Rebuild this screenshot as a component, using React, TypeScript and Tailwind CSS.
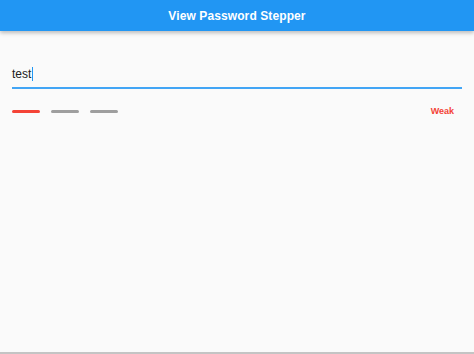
export default function App() {
  const steps = ["bg-[#f44336]", "bg-[#9e9e9e]", "bg-[#9e9e9e]"];

  return (
    <div
      className="w-[474px] h-[354px] bg-[#fafafa] flex flex-col overflow-hidden"
      style={{ fontFamily: '"Helvetica Neue", "Liberation Sans", Arial, sans-serif' }}
    >
      {/* App bar */}
      <div className="h-[31px] bg-[#2196f3] shadow-[0_2px_4px_rgba(0,0,0,0.25)] flex items-center justify-center shrink-0 z-10">
        <span className="text-white text-[12px] font-bold tracking-[0.1px]">View Password Stepper</span>
      </div>

      <div className="flex-1 px-3 flex flex-col">
        {/* Password field */}
        <div className="mt-[30px] h-[28px] border-b-2 border-[#42a5f5] flex items-center">
          <span className="text-[12px] text-[#212121] leading-none">test</span>
          <span className="w-[1.5px] h-[14px] bg-[#2196f3] ml-[0.5px]" />
        </div>

        {/* Strength steps */}
        <div className="mt-[16px] flex items-center pr-2">
          <div className="flex items-center gap-[11px]">
            {steps.map((c, i) => (
              <span key={i} className={`w-[28px] h-[3px] rounded-full ${c}`} />
            ))}
          </div>
          <span className="ml-auto text-[9px] font-bold text-[#f44336]">Weak</span>
        </div>
      </div>

      <div className="h-[2px] bg-[#c4c4c4] shrink-0" />
    </div>
  );
}
